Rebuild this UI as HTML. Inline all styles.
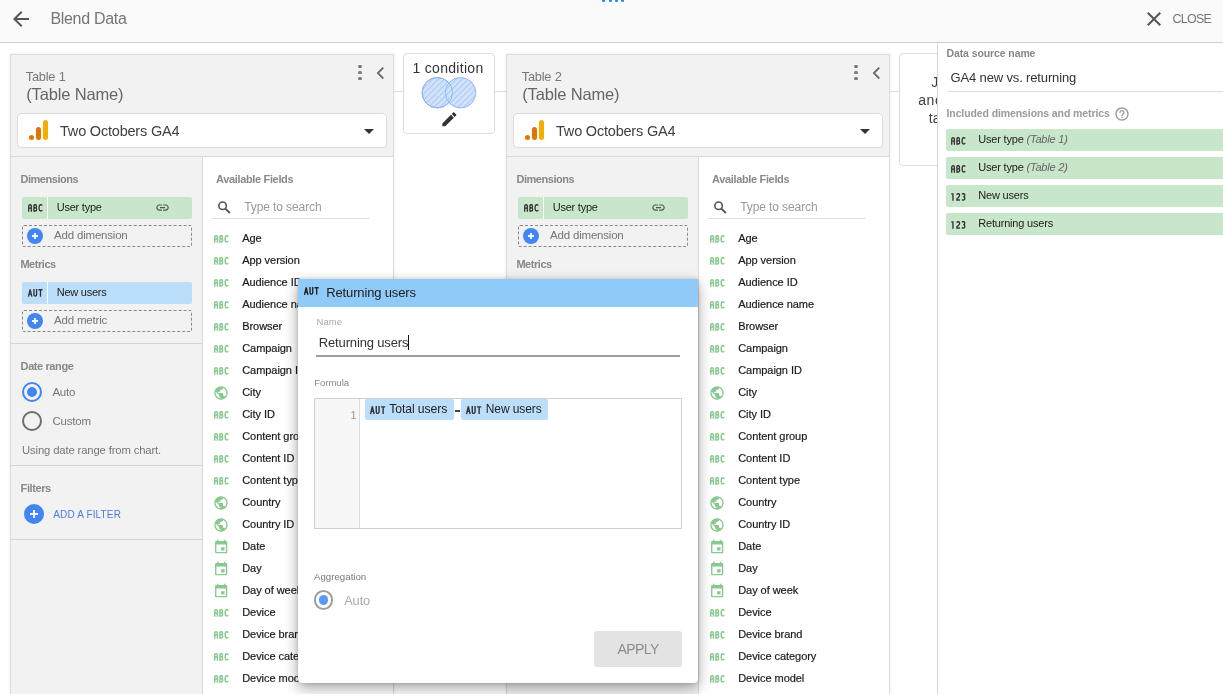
<!DOCTYPE html>
<html><head><meta charset="utf-8"><style>
*{box-sizing:border-box;margin:0;padding:0}
html,body{width:1223px;height:694px;overflow:hidden;background:#fff;font-family:"Liberation Sans",sans-serif;position:relative}
div,span,svg{position:absolute}
.t{white-space:nowrap}
.panel{top:54px;width:384px;height:700px;border:1px solid #dadada;background:#f2f2f2;box-shadow:0 0 3px rgba(0,0,0,.07)}
.plus{width:16px;height:16px;border-radius:50%;background:#4285f4}
.plus::before{content:"";position:absolute;left:5px;top:7.2px;width:6px;height:1.6px;background:#f4f8ff}
.plus::after{content:"";position:absolute;left:7.2px;top:5px;width:1.6px;height:6px;background:#f4f8ff}
.conn{height:1px;background:#dedede;top:91px}
</style></head><body><div id="root" style="left:0;top:0;width:1223px;height:694px;overflow:hidden;will-change:transform">
<div class="box" style="left:0;top:0;width:1223px;height:43px;background:#fafafa;border-bottom:1px solid #cfcfcf"></div>
<svg style="left:9px;top:7px" width="24" height="24" viewBox="0 0 24 24"><path fill="#555" d="M20 11H7.83l5.59-5.59L12 4l-8 8 8 8 1.41-1.41L7.83 13H20v-2z"/></svg>
<div class="t" style="left:50.40px;top:10.65px;font-size:16px;line-height:16px;color:#757575;letter-spacing:-0.3px">Blend Data</div>
<div class="box" style="left:602.3px;top:-1.2px;width:3px;height:3.4px;border-radius:50%;background:#1a8cf0"></div>
<div class="box" style="left:608.5px;top:-1.2px;width:3px;height:3.4px;border-radius:50%;background:#1a8cf0"></div>
<div class="box" style="left:614.8px;top:-1.2px;width:3px;height:3.4px;border-radius:50%;background:#1a8cf0"></div>
<div class="box" style="left:621px;top:-1.2px;width:3px;height:3.4px;border-radius:50%;background:#1a8cf0"></div>
<svg style="left:1142px;top:7px" width="24" height="24" viewBox="0 0 24 24"><path fill="#555" d="M19 6.41L17.59 5 12 10.59 6.41 5 5 6.41 10.59 12 5 17.59 6.41 19 12 13.41 17.59 19 19 17.59 13.41 12z"/></svg>
<div class="t" style="left:1172.60px;top:12.62px;font-size:12.5px;line-height:12.5px;color:#757575;letter-spacing:-0.8px">CLOSE</div>

<div class="conn" style="left:393px;width:10px"></div>
<div class="conn" style="left:495px;width:11px"></div>
<div class="conn" style="left:889px;width:11px"></div>

<div class="panel" style="left:10px"></div>
<div class="box" style="left:11px;top:55px;width:382px;height:101px;background:#f2f2f2"></div>
<div class="box" style="left:11px;top:156px;width:382px;height:1px;background:#d9d9d9"></div>
<div class="box" style="left:11px;top:157px;width:192px;height:540px;background:#f2f2f2;border-right:1px solid #dadada"></div>
<div class="box" style="left:203px;top:157px;width:190px;height:540px;background:#fff"></div>
<div class="t" style="left:25.70px;top:70.66px;font-size:12.8px;line-height:12.8px;color:#777;letter-spacing:-0.2px">Table 1</div>
<div class="t" style="left:26.20px;top:86.23px;font-size:16.5px;line-height:16.5px;color:#666;letter-spacing:-0.15px">(Table Name)</div>
<div class="box" style="left:358.35px;top:65px;width:3.3px;height:3.3px;border-radius:50%;background:#777"></div>
<div class="box" style="left:358.35px;top:71.1px;width:3.3px;height:3.3px;border-radius:50%;background:#777"></div>
<div class="box" style="left:358.35px;top:77.1px;width:3.3px;height:3.3px;border-radius:50%;background:#777"></div>
<svg style="left:372px;top:61px" width="24" height="24" viewBox="372 61 24 24"><path d="M383.3 67.7 L377.9 73.1 L383.3 78.5" stroke="#6a6a6a" stroke-width="1.9" fill="none"/></svg>
<div class="box" style="left:17px;top:113px;width:370px;height:35px;background:#fff;border:1px solid #dcdcdc;border-radius:4px"></div>
<div class="box" style="left:29px;top:135px;width:5px;height:5px;border-radius:50%;background:#e37400"></div>
<div class="box" style="left:36px;top:127px;width:5px;height:13px;border-radius:2.5px;background:#e37400"></div>
<div class="box" style="left:43px;top:120px;width:5px;height:20px;border-radius:2.5px;background:#f9ab00"></div>
<div class="t" style="left:60.00px;top:123.72px;font-size:14.5px;line-height:14.5px;color:#3c4043;letter-spacing:-0.2px">Two Octobers GA4</div>
<div class="box" style="left:363.5px;top:128.5px;width:0;height:0;border-left:5.5px solid transparent;border-right:5.5px solid transparent;border-top:5.6px solid #333"></div>
<div class="t" style="left:20.40px;top:173.99px;font-size:11px;line-height:11px;color:#888;font-weight:bold;letter-spacing:-0.45px">Dimensions</div>
<div class="box" style="left:22px;top:197px;width:170px;height:21.5px;background:#c8e6c9;border-radius:2px"></div>
<div class="box" style="left:47px;top:197px;width:1px;height:21.5px;background:#fff"></div>
<svg style="left:27px;top:203px" width="18.34" height="10.5" viewBox="-1 -1 17.96 10.28"><g fill="none" stroke="#333" stroke-width="1.3" stroke-linecap="butt"><path transform="translate(0.00,0)" d="M0.7 7.5 V2.3 Q0.7 0.7 2 0.7 Q3.3 0.7 3.3 2.3 V7.5 M0.7 4.0 H3.3"/><path transform="translate(5.10,0)" d="M0.7 0.7 V6.8 H2.2 Q3.4 6.8 3.4 5.2 Q3.4 3.7 2.2 3.7 H0.7 M0.7 0.7 H2.1 Q3.2 0.7 3.2 2.2 Q3.2 3.7 2.1 3.7"/><path transform="translate(10.20,0)" d="M3.6 1.6 Q3.3 0.7 2.2 0.7 Q0.7 0.7 0.7 3.75 Q0.7 6.8 2.2 6.8 Q3.3 6.8 3.6 5.9"/></g></svg>
<div class="t" style="left:56.80px;top:201.59px;font-size:11px;line-height:11px;color:#212121;letter-spacing:-0.25px">User type</div>
<svg style="left:154.5px;top:199.5px" width="15" height="15" viewBox="0 0 24 24"><path fill="#555" d="M3.9 12c0-1.71 1.39-3.1 3.1-3.1h4V7H7c-2.76 0-5 2.24-5 5s2.24 5 5 5h4v-1.9H7c-1.71 0-3.1-1.39-3.1-3.1zM8 13h8v-2H8v2zm9-6h-4v1.9h4c1.71 0 3.1 1.39 3.1 3.1s-1.39 3.1-3.1 3.1h-4V17h4c2.76 0 5-2.24 5-5s-2.24-5-5-5z"/></svg>
<div class="box" style="left:22px;top:225px;width:170px;height:22px;border:1px dashed #8a8a8a;border-radius:2px"></div>
<div class="box plus" style="left:27px;top:228px"></div>
<div class="t" style="left:54.10px;top:229.96px;font-size:11.5px;line-height:11.5px;color:#757575;letter-spacing:-0.2px">Add dimension</div>
<div class="t" style="left:20.40px;top:259.09px;font-size:11px;line-height:11px;color:#888;font-weight:bold;letter-spacing:-0.45px">Metrics</div>
<div class="box" style="left:22px;top:282px;width:170px;height:21.5px;background:#bbdefb;border-radius:2px"></div>
<div class="box" style="left:47px;top:282px;width:1px;height:21.5px;background:#fff"></div>
<svg style="left:27px;top:288px" width="18.34" height="10.5" viewBox="-1 -1 17.96 10.28"><g fill="none" stroke="#333" stroke-width="1.3" stroke-linecap="butt"><path transform="translate(0.00,0)" d="M0.4 7.5 L2.1 0.4 L3.7 7.5 M1.1 5 H3"/><path transform="translate(5.10,0)" d="M0.7 0 V5.3 Q0.7 6.8 2 6.8 Q3.3 6.8 3.3 5.3 V0"/><path transform="translate(10.20,0)" d="M0 0.7 H4 M2 0.7 V7.5"/></g></svg>
<div class="t" style="left:56.80px;top:286.59px;font-size:11px;line-height:11px;color:#212121;letter-spacing:-0.25px">New users</div>
<div class="box" style="left:22px;top:310px;width:170px;height:22px;border:1px dashed #8a8a8a;border-radius:2px"></div>
<div class="box plus" style="left:27px;top:313px"></div>
<div class="t" style="left:54.10px;top:314.96px;font-size:11.5px;line-height:11.5px;color:#757575;letter-spacing:-0.2px">Add metric</div>
<div class="box" style="left:11px;top:343px;width:191px;height:1px;background:#d4d4d4"></div>
<div class="t" style="left:20.60px;top:361.09px;font-size:11px;line-height:11px;color:#888;font-weight:bold;letter-spacing:-0.4px">Date range</div>
<div class="box" style="left:21.8px;top:381.9px;width:20px;height:20px;border:2px solid #4285f4;border-radius:50%"></div>
<div class="box" style="left:26.8px;top:386.9px;width:10px;height:10px;border-radius:50%;background:#4285f4"></div>
<div class="t" style="left:52.40px;top:386.66px;font-size:11.5px;line-height:11.5px;color:#777;letter-spacing:-0.2px">Auto</div>
<div class="box" style="left:21.8px;top:411.2px;width:20px;height:20px;border:2px solid #6e6e6e;border-radius:50%"></div>
<div class="t" style="left:52.40px;top:415.96px;font-size:11.5px;line-height:11.5px;color:#777;letter-spacing:-0.2px">Custom</div>
<div class="t" style="left:22.10px;top:445.03px;font-size:11.3px;line-height:11.3px;color:#777;letter-spacing:-0.15px">Using date range from chart.</div>
<div class="box" style="left:11px;top:465px;width:191px;height:1px;background:#d4d4d4"></div>
<div class="t" style="left:20.60px;top:482.99px;font-size:11px;line-height:11px;color:#888;font-weight:bold;letter-spacing:-0.4px">Filters</div>
<div class="box" style="left:23.6px;top:504.1px;width:20px;height:20px;border-radius:50%;background:#4285f4"></div>
<div class="box" style="left:29.6px;top:513.1px;width:8px;height:2px;background:#fff"></div>
<div class="box" style="left:32.6px;top:510.1px;width:2px;height:8px;background:#fff"></div>
<div class="t" style="left:53.30px;top:510.23px;font-size:10px;line-height:10px;color:#4a7be0;letter-spacing:0.15px">ADD A FILTER</div>
<div class="box" style="left:11px;top:539px;width:191px;height:1px;background:#d4d4d4"></div>
<div class="t" style="left:216.10px;top:173.69px;font-size:11px;line-height:11px;color:#888;font-weight:bold;letter-spacing:-0.35px">Available Fields</div>
<svg style="left:215px;top:196px" width="30" height="22" viewBox="215 196 30 22"><circle cx="222.6" cy="205.8" r="3.75" stroke="#555" stroke-width="1.6" fill="none"/><path d="M225.4 208.6 L229.8 213" stroke="#555" stroke-width="1.9"/></svg>
<div class="t" style="left:244.20px;top:201.04px;font-size:12px;line-height:12px;color:#9a9a9a;letter-spacing:-0.1px">Type to search</div>
<div class="box" style="left:212px;top:218px;width:157px;height:1px;background:#dcdcdc"></div>
<svg style="left:213px;top:234.2px" width="18.34" height="10.5" viewBox="-1 -1 17.96 10.28"><g fill="none" stroke="#88c990" stroke-width="1.45" stroke-linecap="butt"><path transform="translate(0.00,0)" d="M0.7 7.5 V2.3 Q0.7 0.7 2 0.7 Q3.3 0.7 3.3 2.3 V7.5 M0.7 4.0 H3.3"/><path transform="translate(5.10,0)" d="M0.7 0.7 V6.8 H2.2 Q3.4 6.8 3.4 5.2 Q3.4 3.7 2.2 3.7 H0.7 M0.7 0.7 H2.1 Q3.2 0.7 3.2 2.2 Q3.2 3.7 2.1 3.7"/><path transform="translate(10.20,0)" d="M3.6 1.6 Q3.3 0.7 2.2 0.7 Q0.7 0.7 0.7 3.75 Q0.7 6.8 2.2 6.8 Q3.3 6.8 3.6 5.9"/></g></svg>
<div class="t" style="left:242.20px;top:232.69px;font-size:11px;line-height:11px;color:#1a1a1a;letter-spacing:-0.05px;-webkit-text-stroke:0.2px #1a1a1a">Age</div>
<svg style="left:213px;top:256.2px" width="18.34" height="10.5" viewBox="-1 -1 17.96 10.28"><g fill="none" stroke="#88c990" stroke-width="1.45" stroke-linecap="butt"><path transform="translate(0.00,0)" d="M0.7 7.5 V2.3 Q0.7 0.7 2 0.7 Q3.3 0.7 3.3 2.3 V7.5 M0.7 4.0 H3.3"/><path transform="translate(5.10,0)" d="M0.7 0.7 V6.8 H2.2 Q3.4 6.8 3.4 5.2 Q3.4 3.7 2.2 3.7 H0.7 M0.7 0.7 H2.1 Q3.2 0.7 3.2 2.2 Q3.2 3.7 2.1 3.7"/><path transform="translate(10.20,0)" d="M3.6 1.6 Q3.3 0.7 2.2 0.7 Q0.7 0.7 0.7 3.75 Q0.7 6.8 2.2 6.8 Q3.3 6.8 3.6 5.9"/></g></svg>
<div class="t" style="left:242.20px;top:254.69px;font-size:11px;line-height:11px;color:#1a1a1a;letter-spacing:-0.05px;-webkit-text-stroke:0.2px #1a1a1a">App version</div>
<svg style="left:213px;top:278.2px" width="18.34" height="10.5" viewBox="-1 -1 17.96 10.28"><g fill="none" stroke="#88c990" stroke-width="1.45" stroke-linecap="butt"><path transform="translate(0.00,0)" d="M0.7 7.5 V2.3 Q0.7 0.7 2 0.7 Q3.3 0.7 3.3 2.3 V7.5 M0.7 4.0 H3.3"/><path transform="translate(5.10,0)" d="M0.7 0.7 V6.8 H2.2 Q3.4 6.8 3.4 5.2 Q3.4 3.7 2.2 3.7 H0.7 M0.7 0.7 H2.1 Q3.2 0.7 3.2 2.2 Q3.2 3.7 2.1 3.7"/><path transform="translate(10.20,0)" d="M3.6 1.6 Q3.3 0.7 2.2 0.7 Q0.7 0.7 0.7 3.75 Q0.7 6.8 2.2 6.8 Q3.3 6.8 3.6 5.9"/></g></svg>
<div class="t" style="left:242.20px;top:276.69px;font-size:11px;line-height:11px;color:#1a1a1a;letter-spacing:-0.05px;-webkit-text-stroke:0.2px #1a1a1a">Audience ID</div>
<svg style="left:213px;top:300.2px" width="18.34" height="10.5" viewBox="-1 -1 17.96 10.28"><g fill="none" stroke="#88c990" stroke-width="1.45" stroke-linecap="butt"><path transform="translate(0.00,0)" d="M0.7 7.5 V2.3 Q0.7 0.7 2 0.7 Q3.3 0.7 3.3 2.3 V7.5 M0.7 4.0 H3.3"/><path transform="translate(5.10,0)" d="M0.7 0.7 V6.8 H2.2 Q3.4 6.8 3.4 5.2 Q3.4 3.7 2.2 3.7 H0.7 M0.7 0.7 H2.1 Q3.2 0.7 3.2 2.2 Q3.2 3.7 2.1 3.7"/><path transform="translate(10.20,0)" d="M3.6 1.6 Q3.3 0.7 2.2 0.7 Q0.7 0.7 0.7 3.75 Q0.7 6.8 2.2 6.8 Q3.3 6.8 3.6 5.9"/></g></svg>
<div class="t" style="left:242.20px;top:298.69px;font-size:11px;line-height:11px;color:#1a1a1a;letter-spacing:-0.05px;-webkit-text-stroke:0.2px #1a1a1a">Audience name</div>
<svg style="left:213px;top:322.2px" width="18.34" height="10.5" viewBox="-1 -1 17.96 10.28"><g fill="none" stroke="#88c990" stroke-width="1.45" stroke-linecap="butt"><path transform="translate(0.00,0)" d="M0.7 7.5 V2.3 Q0.7 0.7 2 0.7 Q3.3 0.7 3.3 2.3 V7.5 M0.7 4.0 H3.3"/><path transform="translate(5.10,0)" d="M0.7 0.7 V6.8 H2.2 Q3.4 6.8 3.4 5.2 Q3.4 3.7 2.2 3.7 H0.7 M0.7 0.7 H2.1 Q3.2 0.7 3.2 2.2 Q3.2 3.7 2.1 3.7"/><path transform="translate(10.20,0)" d="M3.6 1.6 Q3.3 0.7 2.2 0.7 Q0.7 0.7 0.7 3.75 Q0.7 6.8 2.2 6.8 Q3.3 6.8 3.6 5.9"/></g></svg>
<div class="t" style="left:242.20px;top:320.69px;font-size:11px;line-height:11px;color:#1a1a1a;letter-spacing:-0.05px;-webkit-text-stroke:0.2px #1a1a1a">Browser</div>
<svg style="left:213px;top:344.2px" width="18.34" height="10.5" viewBox="-1 -1 17.96 10.28"><g fill="none" stroke="#88c990" stroke-width="1.45" stroke-linecap="butt"><path transform="translate(0.00,0)" d="M0.7 7.5 V2.3 Q0.7 0.7 2 0.7 Q3.3 0.7 3.3 2.3 V7.5 M0.7 4.0 H3.3"/><path transform="translate(5.10,0)" d="M0.7 0.7 V6.8 H2.2 Q3.4 6.8 3.4 5.2 Q3.4 3.7 2.2 3.7 H0.7 M0.7 0.7 H2.1 Q3.2 0.7 3.2 2.2 Q3.2 3.7 2.1 3.7"/><path transform="translate(10.20,0)" d="M3.6 1.6 Q3.3 0.7 2.2 0.7 Q0.7 0.7 0.7 3.75 Q0.7 6.8 2.2 6.8 Q3.3 6.8 3.6 5.9"/></g></svg>
<div class="t" style="left:242.20px;top:342.69px;font-size:11px;line-height:11px;color:#1a1a1a;letter-spacing:-0.05px;-webkit-text-stroke:0.2px #1a1a1a">Campaign</div>
<svg style="left:213px;top:366.2px" width="18.34" height="10.5" viewBox="-1 -1 17.96 10.28"><g fill="none" stroke="#88c990" stroke-width="1.45" stroke-linecap="butt"><path transform="translate(0.00,0)" d="M0.7 7.5 V2.3 Q0.7 0.7 2 0.7 Q3.3 0.7 3.3 2.3 V7.5 M0.7 4.0 H3.3"/><path transform="translate(5.10,0)" d="M0.7 0.7 V6.8 H2.2 Q3.4 6.8 3.4 5.2 Q3.4 3.7 2.2 3.7 H0.7 M0.7 0.7 H2.1 Q3.2 0.7 3.2 2.2 Q3.2 3.7 2.1 3.7"/><path transform="translate(10.20,0)" d="M3.6 1.6 Q3.3 0.7 2.2 0.7 Q0.7 0.7 0.7 3.75 Q0.7 6.8 2.2 6.8 Q3.3 6.8 3.6 5.9"/></g></svg>
<div class="t" style="left:242.20px;top:364.69px;font-size:11px;line-height:11px;color:#1a1a1a;letter-spacing:-0.05px;-webkit-text-stroke:0.2px #1a1a1a">Campaign ID</div>
<svg style="left:213px;top:385px" width="16" height="16" viewBox="0 0 24 24"><path fill="#88c990" d="M12 2C6.48 2 2 6.48 2 12s4.48 10 10 10 10-4.48 10-10S17.52 2 12 2zm-1 17.93c-3.95-.49-7-3.85-7-7.93 0-.62.08-1.21.21-1.79L9 15v1c0 1.1.9 2 2 2v1.93zm6.9-2.54c-.26-.81-1-1.39-1.9-1.39h-1v-3c0-.55-.45-1-1-1H8v-2h2c.55 0 1-.45 1-1V7h2c1.1 0 2-.9 2-2v-.41c2.93 1.19 5 4.06 5 7.41 0 2.08-.8 3.97-2.1 5.39z"/></svg>
<div class="t" style="left:242.20px;top:386.69px;font-size:11px;line-height:11px;color:#1a1a1a;letter-spacing:-0.05px;-webkit-text-stroke:0.2px #1a1a1a">City</div>
<svg style="left:213px;top:410.2px" width="18.34" height="10.5" viewBox="-1 -1 17.96 10.28"><g fill="none" stroke="#88c990" stroke-width="1.45" stroke-linecap="butt"><path transform="translate(0.00,0)" d="M0.7 7.5 V2.3 Q0.7 0.7 2 0.7 Q3.3 0.7 3.3 2.3 V7.5 M0.7 4.0 H3.3"/><path transform="translate(5.10,0)" d="M0.7 0.7 V6.8 H2.2 Q3.4 6.8 3.4 5.2 Q3.4 3.7 2.2 3.7 H0.7 M0.7 0.7 H2.1 Q3.2 0.7 3.2 2.2 Q3.2 3.7 2.1 3.7"/><path transform="translate(10.20,0)" d="M3.6 1.6 Q3.3 0.7 2.2 0.7 Q0.7 0.7 0.7 3.75 Q0.7 6.8 2.2 6.8 Q3.3 6.8 3.6 5.9"/></g></svg>
<div class="t" style="left:242.20px;top:408.69px;font-size:11px;line-height:11px;color:#1a1a1a;letter-spacing:-0.05px;-webkit-text-stroke:0.2px #1a1a1a">City ID</div>
<svg style="left:213px;top:432.2px" width="18.34" height="10.5" viewBox="-1 -1 17.96 10.28"><g fill="none" stroke="#88c990" stroke-width="1.45" stroke-linecap="butt"><path transform="translate(0.00,0)" d="M0.7 7.5 V2.3 Q0.7 0.7 2 0.7 Q3.3 0.7 3.3 2.3 V7.5 M0.7 4.0 H3.3"/><path transform="translate(5.10,0)" d="M0.7 0.7 V6.8 H2.2 Q3.4 6.8 3.4 5.2 Q3.4 3.7 2.2 3.7 H0.7 M0.7 0.7 H2.1 Q3.2 0.7 3.2 2.2 Q3.2 3.7 2.1 3.7"/><path transform="translate(10.20,0)" d="M3.6 1.6 Q3.3 0.7 2.2 0.7 Q0.7 0.7 0.7 3.75 Q0.7 6.8 2.2 6.8 Q3.3 6.8 3.6 5.9"/></g></svg>
<div class="t" style="left:242.20px;top:430.69px;font-size:11px;line-height:11px;color:#1a1a1a;letter-spacing:-0.05px;-webkit-text-stroke:0.2px #1a1a1a">Content group</div>
<svg style="left:213px;top:454.2px" width="18.34" height="10.5" viewBox="-1 -1 17.96 10.28"><g fill="none" stroke="#88c990" stroke-width="1.45" stroke-linecap="butt"><path transform="translate(0.00,0)" d="M0.7 7.5 V2.3 Q0.7 0.7 2 0.7 Q3.3 0.7 3.3 2.3 V7.5 M0.7 4.0 H3.3"/><path transform="translate(5.10,0)" d="M0.7 0.7 V6.8 H2.2 Q3.4 6.8 3.4 5.2 Q3.4 3.7 2.2 3.7 H0.7 M0.7 0.7 H2.1 Q3.2 0.7 3.2 2.2 Q3.2 3.7 2.1 3.7"/><path transform="translate(10.20,0)" d="M3.6 1.6 Q3.3 0.7 2.2 0.7 Q0.7 0.7 0.7 3.75 Q0.7 6.8 2.2 6.8 Q3.3 6.8 3.6 5.9"/></g></svg>
<div class="t" style="left:242.20px;top:452.69px;font-size:11px;line-height:11px;color:#1a1a1a;letter-spacing:-0.05px;-webkit-text-stroke:0.2px #1a1a1a">Content ID</div>
<svg style="left:213px;top:476.2px" width="18.34" height="10.5" viewBox="-1 -1 17.96 10.28"><g fill="none" stroke="#88c990" stroke-width="1.45" stroke-linecap="butt"><path transform="translate(0.00,0)" d="M0.7 7.5 V2.3 Q0.7 0.7 2 0.7 Q3.3 0.7 3.3 2.3 V7.5 M0.7 4.0 H3.3"/><path transform="translate(5.10,0)" d="M0.7 0.7 V6.8 H2.2 Q3.4 6.8 3.4 5.2 Q3.4 3.7 2.2 3.7 H0.7 M0.7 0.7 H2.1 Q3.2 0.7 3.2 2.2 Q3.2 3.7 2.1 3.7"/><path transform="translate(10.20,0)" d="M3.6 1.6 Q3.3 0.7 2.2 0.7 Q0.7 0.7 0.7 3.75 Q0.7 6.8 2.2 6.8 Q3.3 6.8 3.6 5.9"/></g></svg>
<div class="t" style="left:242.20px;top:474.69px;font-size:11px;line-height:11px;color:#1a1a1a;letter-spacing:-0.05px;-webkit-text-stroke:0.2px #1a1a1a">Content type</div>
<svg style="left:213px;top:495px" width="16" height="16" viewBox="0 0 24 24"><path fill="#88c990" d="M12 2C6.48 2 2 6.48 2 12s4.48 10 10 10 10-4.48 10-10S17.52 2 12 2zm-1 17.93c-3.95-.49-7-3.85-7-7.93 0-.62.08-1.21.21-1.79L9 15v1c0 1.1.9 2 2 2v1.93zm6.9-2.54c-.26-.81-1-1.39-1.9-1.39h-1v-3c0-.55-.45-1-1-1H8v-2h2c.55 0 1-.45 1-1V7h2c1.1 0 2-.9 2-2v-.41c2.93 1.19 5 4.06 5 7.41 0 2.08-.8 3.97-2.1 5.39z"/></svg>
<div class="t" style="left:242.20px;top:496.69px;font-size:11px;line-height:11px;color:#1a1a1a;letter-spacing:-0.05px;-webkit-text-stroke:0.2px #1a1a1a">Country</div>
<svg style="left:213px;top:517px" width="16" height="16" viewBox="0 0 24 24"><path fill="#88c990" d="M12 2C6.48 2 2 6.48 2 12s4.48 10 10 10 10-4.48 10-10S17.52 2 12 2zm-1 17.93c-3.95-.49-7-3.85-7-7.93 0-.62.08-1.21.21-1.79L9 15v1c0 1.1.9 2 2 2v1.93zm6.9-2.54c-.26-.81-1-1.39-1.9-1.39h-1v-3c0-.55-.45-1-1-1H8v-2h2c.55 0 1-.45 1-1V7h2c1.1 0 2-.9 2-2v-.41c2.93 1.19 5 4.06 5 7.41 0 2.08-.8 3.97-2.1 5.39z"/></svg>
<div class="t" style="left:242.20px;top:518.69px;font-size:11px;line-height:11px;color:#1a1a1a;letter-spacing:-0.05px;-webkit-text-stroke:0.2px #1a1a1a">Country ID</div>
<svg style="left:212.8px;top:538.8px" width="16.3" height="16.3" viewBox="0 0 24 24"><path fill="#88c990" d="M17 12h-5v5h5v-5zM16 1v2H8V1H6v2H5c-1.11 0-1.99.9-1.99 2L3 19c0 1.1.89 2 2 2h14c1.1 0 2-.9 2-2V5c0-1.1-.9-2-2-2h-1V1h-2zm3 18H5V8h14v11z"/></svg>
<div class="t" style="left:242.20px;top:540.69px;font-size:11px;line-height:11px;color:#1a1a1a;letter-spacing:-0.05px;-webkit-text-stroke:0.2px #1a1a1a">Date</div>
<svg style="left:212.8px;top:560.8px" width="16.3" height="16.3" viewBox="0 0 24 24"><path fill="#88c990" d="M17 12h-5v5h5v-5zM16 1v2H8V1H6v2H5c-1.11 0-1.99.9-1.99 2L3 19c0 1.1.89 2 2 2h14c1.1 0 2-.9 2-2V5c0-1.1-.9-2-2-2h-1V1h-2zm3 18H5V8h14v11z"/></svg>
<div class="t" style="left:242.20px;top:562.69px;font-size:11px;line-height:11px;color:#1a1a1a;letter-spacing:-0.05px;-webkit-text-stroke:0.2px #1a1a1a">Day</div>
<svg style="left:212.8px;top:582.8px" width="16.3" height="16.3" viewBox="0 0 24 24"><path fill="#88c990" d="M17 12h-5v5h5v-5zM16 1v2H8V1H6v2H5c-1.11 0-1.99.9-1.99 2L3 19c0 1.1.89 2 2 2h14c1.1 0 2-.9 2-2V5c0-1.1-.9-2-2-2h-1V1h-2zm3 18H5V8h14v11z"/></svg>
<div class="t" style="left:242.20px;top:584.69px;font-size:11px;line-height:11px;color:#1a1a1a;letter-spacing:-0.05px;-webkit-text-stroke:0.2px #1a1a1a">Day of week</div>
<svg style="left:213px;top:608.2px" width="18.34" height="10.5" viewBox="-1 -1 17.96 10.28"><g fill="none" stroke="#88c990" stroke-width="1.45" stroke-linecap="butt"><path transform="translate(0.00,0)" d="M0.7 7.5 V2.3 Q0.7 0.7 2 0.7 Q3.3 0.7 3.3 2.3 V7.5 M0.7 4.0 H3.3"/><path transform="translate(5.10,0)" d="M0.7 0.7 V6.8 H2.2 Q3.4 6.8 3.4 5.2 Q3.4 3.7 2.2 3.7 H0.7 M0.7 0.7 H2.1 Q3.2 0.7 3.2 2.2 Q3.2 3.7 2.1 3.7"/><path transform="translate(10.20,0)" d="M3.6 1.6 Q3.3 0.7 2.2 0.7 Q0.7 0.7 0.7 3.75 Q0.7 6.8 2.2 6.8 Q3.3 6.8 3.6 5.9"/></g></svg>
<div class="t" style="left:242.20px;top:606.69px;font-size:11px;line-height:11px;color:#1a1a1a;letter-spacing:-0.05px;-webkit-text-stroke:0.2px #1a1a1a">Device</div>
<svg style="left:213px;top:630.2px" width="18.34" height="10.5" viewBox="-1 -1 17.96 10.28"><g fill="none" stroke="#88c990" stroke-width="1.45" stroke-linecap="butt"><path transform="translate(0.00,0)" d="M0.7 7.5 V2.3 Q0.7 0.7 2 0.7 Q3.3 0.7 3.3 2.3 V7.5 M0.7 4.0 H3.3"/><path transform="translate(5.10,0)" d="M0.7 0.7 V6.8 H2.2 Q3.4 6.8 3.4 5.2 Q3.4 3.7 2.2 3.7 H0.7 M0.7 0.7 H2.1 Q3.2 0.7 3.2 2.2 Q3.2 3.7 2.1 3.7"/><path transform="translate(10.20,0)" d="M3.6 1.6 Q3.3 0.7 2.2 0.7 Q0.7 0.7 0.7 3.75 Q0.7 6.8 2.2 6.8 Q3.3 6.8 3.6 5.9"/></g></svg>
<div class="t" style="left:242.20px;top:628.69px;font-size:11px;line-height:11px;color:#1a1a1a;letter-spacing:-0.05px;-webkit-text-stroke:0.2px #1a1a1a">Device brand</div>
<svg style="left:213px;top:652.2px" width="18.34" height="10.5" viewBox="-1 -1 17.96 10.28"><g fill="none" stroke="#88c990" stroke-width="1.45" stroke-linecap="butt"><path transform="translate(0.00,0)" d="M0.7 7.5 V2.3 Q0.7 0.7 2 0.7 Q3.3 0.7 3.3 2.3 V7.5 M0.7 4.0 H3.3"/><path transform="translate(5.10,0)" d="M0.7 0.7 V6.8 H2.2 Q3.4 6.8 3.4 5.2 Q3.4 3.7 2.2 3.7 H0.7 M0.7 0.7 H2.1 Q3.2 0.7 3.2 2.2 Q3.2 3.7 2.1 3.7"/><path transform="translate(10.20,0)" d="M3.6 1.6 Q3.3 0.7 2.2 0.7 Q0.7 0.7 0.7 3.75 Q0.7 6.8 2.2 6.8 Q3.3 6.8 3.6 5.9"/></g></svg>
<div class="t" style="left:242.20px;top:650.69px;font-size:11px;line-height:11px;color:#1a1a1a;letter-spacing:-0.05px;-webkit-text-stroke:0.2px #1a1a1a">Device category</div>
<svg style="left:213px;top:674.2px" width="18.34" height="10.5" viewBox="-1 -1 17.96 10.28"><g fill="none" stroke="#88c990" stroke-width="1.45" stroke-linecap="butt"><path transform="translate(0.00,0)" d="M0.7 7.5 V2.3 Q0.7 0.7 2 0.7 Q3.3 0.7 3.3 2.3 V7.5 M0.7 4.0 H3.3"/><path transform="translate(5.10,0)" d="M0.7 0.7 V6.8 H2.2 Q3.4 6.8 3.4 5.2 Q3.4 3.7 2.2 3.7 H0.7 M0.7 0.7 H2.1 Q3.2 0.7 3.2 2.2 Q3.2 3.7 2.1 3.7"/><path transform="translate(10.20,0)" d="M3.6 1.6 Q3.3 0.7 2.2 0.7 Q0.7 0.7 0.7 3.75 Q0.7 6.8 2.2 6.8 Q3.3 6.8 3.6 5.9"/></g></svg>
<div class="t" style="left:242.20px;top:672.69px;font-size:11px;line-height:11px;color:#1a1a1a;letter-spacing:-0.05px;-webkit-text-stroke:0.2px #1a1a1a">Device model</div>
<svg style="left:213px;top:696.2px" width="18.34" height="10.5" viewBox="-1 -1 17.96 10.28"><g fill="none" stroke="#88c990" stroke-width="1.45" stroke-linecap="butt"><path transform="translate(0.00,0)" d="M0.7 7.5 V2.3 Q0.7 0.7 2 0.7 Q3.3 0.7 3.3 2.3 V7.5 M0.7 4.0 H3.3"/><path transform="translate(5.10,0)" d="M0.7 0.7 V6.8 H2.2 Q3.4 6.8 3.4 5.2 Q3.4 3.7 2.2 3.7 H0.7 M0.7 0.7 H2.1 Q3.2 0.7 3.2 2.2 Q3.2 3.7 2.1 3.7"/><path transform="translate(10.20,0)" d="M3.6 1.6 Q3.3 0.7 2.2 0.7 Q0.7 0.7 0.7 3.75 Q0.7 6.8 2.2 6.8 Q3.3 6.8 3.6 5.9"/></g></svg>
<div class="t" style="left:242.20px;top:694.69px;font-size:11px;line-height:11px;color:#1a1a1a;letter-spacing:-0.05px;-webkit-text-stroke:0.2px #1a1a1a">Device OS</div>


<div class="panel" style="left:506px"></div>
<div class="box" style="left:507px;top:55px;width:382px;height:101px;background:#f2f2f2"></div>
<div class="box" style="left:507px;top:156px;width:382px;height:1px;background:#d9d9d9"></div>
<div class="box" style="left:507px;top:157px;width:192px;height:540px;background:#f2f2f2;border-right:1px solid #dadada"></div>
<div class="box" style="left:699px;top:157px;width:190px;height:540px;background:#fff"></div>
<div class="t" style="left:521.70px;top:70.66px;font-size:12.8px;line-height:12.8px;color:#777;letter-spacing:-0.2px">Table 2</div>
<div class="t" style="left:522.20px;top:86.23px;font-size:16.5px;line-height:16.5px;color:#666;letter-spacing:-0.15px">(Table Name)</div>
<div class="box" style="left:854.35px;top:65px;width:3.3px;height:3.3px;border-radius:50%;background:#777"></div>
<div class="box" style="left:854.35px;top:71.1px;width:3.3px;height:3.3px;border-radius:50%;background:#777"></div>
<div class="box" style="left:854.35px;top:77.1px;width:3.3px;height:3.3px;border-radius:50%;background:#777"></div>
<svg style="left:868px;top:61px" width="24" height="24" viewBox="868 61 24 24"><path d="M879.3 67.7 L873.9 73.1 L879.3 78.5" stroke="#6a6a6a" stroke-width="1.9" fill="none"/></svg>
<div class="box" style="left:513px;top:113px;width:370px;height:35px;background:#fff;border:1px solid #dcdcdc;border-radius:4px"></div>
<div class="box" style="left:525px;top:135px;width:5px;height:5px;border-radius:50%;background:#e37400"></div>
<div class="box" style="left:532px;top:127px;width:5px;height:13px;border-radius:2.5px;background:#e37400"></div>
<div class="box" style="left:539px;top:120px;width:5px;height:20px;border-radius:2.5px;background:#f9ab00"></div>
<div class="t" style="left:556.00px;top:123.72px;font-size:14.5px;line-height:14.5px;color:#3c4043;letter-spacing:-0.2px">Two Octobers GA4</div>
<div class="box" style="left:859.5px;top:128.5px;width:0;height:0;border-left:5.5px solid transparent;border-right:5.5px solid transparent;border-top:5.6px solid #333"></div>
<div class="t" style="left:516.40px;top:173.99px;font-size:11px;line-height:11px;color:#888;font-weight:bold;letter-spacing:-0.45px">Dimensions</div>
<div class="box" style="left:518px;top:197px;width:170px;height:21.5px;background:#c8e6c9;border-radius:2px"></div>
<div class="box" style="left:543px;top:197px;width:1px;height:21.5px;background:#fff"></div>
<svg style="left:523px;top:203px" width="18.34" height="10.5" viewBox="-1 -1 17.96 10.28"><g fill="none" stroke="#333" stroke-width="1.3" stroke-linecap="butt"><path transform="translate(0.00,0)" d="M0.7 7.5 V2.3 Q0.7 0.7 2 0.7 Q3.3 0.7 3.3 2.3 V7.5 M0.7 4.0 H3.3"/><path transform="translate(5.10,0)" d="M0.7 0.7 V6.8 H2.2 Q3.4 6.8 3.4 5.2 Q3.4 3.7 2.2 3.7 H0.7 M0.7 0.7 H2.1 Q3.2 0.7 3.2 2.2 Q3.2 3.7 2.1 3.7"/><path transform="translate(10.20,0)" d="M3.6 1.6 Q3.3 0.7 2.2 0.7 Q0.7 0.7 0.7 3.75 Q0.7 6.8 2.2 6.8 Q3.3 6.8 3.6 5.9"/></g></svg>
<div class="t" style="left:552.80px;top:201.59px;font-size:11px;line-height:11px;color:#212121;letter-spacing:-0.25px">User type</div>
<svg style="left:650.5px;top:199.5px" width="15" height="15" viewBox="0 0 24 24"><path fill="#555" d="M3.9 12c0-1.71 1.39-3.1 3.1-3.1h4V7H7c-2.76 0-5 2.24-5 5s2.24 5 5 5h4v-1.9H7c-1.71 0-3.1-1.39-3.1-3.1zM8 13h8v-2H8v2zm9-6h-4v1.9h4c1.71 0 3.1 1.39 3.1 3.1s-1.39 3.1-3.1 3.1h-4V17h4c2.76 0 5-2.24 5-5s-2.24-5-5-5z"/></svg>
<div class="box" style="left:518px;top:225px;width:170px;height:22px;border:1px dashed #8a8a8a;border-radius:2px"></div>
<div class="box plus" style="left:523px;top:228px"></div>
<div class="t" style="left:550.10px;top:229.96px;font-size:11.5px;line-height:11.5px;color:#757575;letter-spacing:-0.2px">Add dimension</div>
<div class="t" style="left:516.40px;top:259.09px;font-size:11px;line-height:11px;color:#888;font-weight:bold;letter-spacing:-0.45px">Metrics</div>
<div class="box" style="left:518px;top:282px;width:170px;height:21.5px;background:#bbdefb;border-radius:2px"></div>
<div class="box" style="left:543px;top:282px;width:1px;height:21.5px;background:#fff"></div>
<svg style="left:523px;top:288px" width="18.34" height="10.5" viewBox="-1 -1 17.96 10.28"><g fill="none" stroke="#333" stroke-width="1.3" stroke-linecap="butt"><path transform="translate(0.00,0)" d="M0.4 7.5 L2.1 0.4 L3.7 7.5 M1.1 5 H3"/><path transform="translate(5.10,0)" d="M0.7 0 V5.3 Q0.7 6.8 2 6.8 Q3.3 6.8 3.3 5.3 V0"/><path transform="translate(10.20,0)" d="M0 0.7 H4 M2 0.7 V7.5"/></g></svg>
<div class="t" style="left:552.80px;top:286.59px;font-size:11px;line-height:11px;color:#212121;letter-spacing:-0.25px">New users</div>
<div class="box" style="left:518px;top:310px;width:170px;height:22px;border:1px dashed #8a8a8a;border-radius:2px"></div>
<div class="box plus" style="left:523px;top:313px"></div>
<div class="t" style="left:550.10px;top:314.96px;font-size:11.5px;line-height:11.5px;color:#757575;letter-spacing:-0.2px">Add metric</div>
<div class="box" style="left:507px;top:343px;width:191px;height:1px;background:#d4d4d4"></div>
<div class="t" style="left:516.60px;top:361.09px;font-size:11px;line-height:11px;color:#888;font-weight:bold;letter-spacing:-0.4px">Date range</div>
<div class="box" style="left:517.8px;top:381.9px;width:20px;height:20px;border:2px solid #4285f4;border-radius:50%"></div>
<div class="box" style="left:522.8px;top:386.9px;width:10px;height:10px;border-radius:50%;background:#4285f4"></div>
<div class="t" style="left:548.40px;top:386.66px;font-size:11.5px;line-height:11.5px;color:#777;letter-spacing:-0.2px">Auto</div>
<div class="box" style="left:517.8px;top:411.2px;width:20px;height:20px;border:2px solid #6e6e6e;border-radius:50%"></div>
<div class="t" style="left:548.40px;top:415.96px;font-size:11.5px;line-height:11.5px;color:#777;letter-spacing:-0.2px">Custom</div>
<div class="t" style="left:518.10px;top:445.03px;font-size:11.3px;line-height:11.3px;color:#777;letter-spacing:-0.15px">Using date range from chart.</div>
<div class="box" style="left:507px;top:465px;width:191px;height:1px;background:#d4d4d4"></div>
<div class="t" style="left:516.60px;top:482.99px;font-size:11px;line-height:11px;color:#888;font-weight:bold;letter-spacing:-0.4px">Filters</div>
<div class="box" style="left:519.6px;top:504.1px;width:20px;height:20px;border-radius:50%;background:#4285f4"></div>
<div class="box" style="left:525.6px;top:513.1px;width:8px;height:2px;background:#fff"></div>
<div class="box" style="left:528.6px;top:510.1px;width:2px;height:8px;background:#fff"></div>
<div class="t" style="left:549.30px;top:510.23px;font-size:10px;line-height:10px;color:#4a7be0;letter-spacing:0.15px">ADD A FILTER</div>
<div class="box" style="left:507px;top:539px;width:191px;height:1px;background:#d4d4d4"></div>
<div class="t" style="left:712.10px;top:173.69px;font-size:11px;line-height:11px;color:#888;font-weight:bold;letter-spacing:-0.35px">Available Fields</div>
<svg style="left:711px;top:196px" width="30" height="22" viewBox="711 196 30 22"><circle cx="718.6" cy="205.8" r="3.75" stroke="#555" stroke-width="1.6" fill="none"/><path d="M721.4 208.6 L725.8 213" stroke="#555" stroke-width="1.9"/></svg>
<div class="t" style="left:740.20px;top:201.04px;font-size:12px;line-height:12px;color:#9a9a9a;letter-spacing:-0.1px">Type to search</div>
<div class="box" style="left:708px;top:218px;width:157px;height:1px;background:#dcdcdc"></div>
<svg style="left:709px;top:234.2px" width="18.34" height="10.5" viewBox="-1 -1 17.96 10.28"><g fill="none" stroke="#88c990" stroke-width="1.45" stroke-linecap="butt"><path transform="translate(0.00,0)" d="M0.7 7.5 V2.3 Q0.7 0.7 2 0.7 Q3.3 0.7 3.3 2.3 V7.5 M0.7 4.0 H3.3"/><path transform="translate(5.10,0)" d="M0.7 0.7 V6.8 H2.2 Q3.4 6.8 3.4 5.2 Q3.4 3.7 2.2 3.7 H0.7 M0.7 0.7 H2.1 Q3.2 0.7 3.2 2.2 Q3.2 3.7 2.1 3.7"/><path transform="translate(10.20,0)" d="M3.6 1.6 Q3.3 0.7 2.2 0.7 Q0.7 0.7 0.7 3.75 Q0.7 6.8 2.2 6.8 Q3.3 6.8 3.6 5.9"/></g></svg>
<div class="t" style="left:738.20px;top:232.69px;font-size:11px;line-height:11px;color:#1a1a1a;letter-spacing:-0.05px;-webkit-text-stroke:0.2px #1a1a1a">Age</div>
<svg style="left:709px;top:256.2px" width="18.34" height="10.5" viewBox="-1 -1 17.96 10.28"><g fill="none" stroke="#88c990" stroke-width="1.45" stroke-linecap="butt"><path transform="translate(0.00,0)" d="M0.7 7.5 V2.3 Q0.7 0.7 2 0.7 Q3.3 0.7 3.3 2.3 V7.5 M0.7 4.0 H3.3"/><path transform="translate(5.10,0)" d="M0.7 0.7 V6.8 H2.2 Q3.4 6.8 3.4 5.2 Q3.4 3.7 2.2 3.7 H0.7 M0.7 0.7 H2.1 Q3.2 0.7 3.2 2.2 Q3.2 3.7 2.1 3.7"/><path transform="translate(10.20,0)" d="M3.6 1.6 Q3.3 0.7 2.2 0.7 Q0.7 0.7 0.7 3.75 Q0.7 6.8 2.2 6.8 Q3.3 6.8 3.6 5.9"/></g></svg>
<div class="t" style="left:738.20px;top:254.69px;font-size:11px;line-height:11px;color:#1a1a1a;letter-spacing:-0.05px;-webkit-text-stroke:0.2px #1a1a1a">App version</div>
<svg style="left:709px;top:278.2px" width="18.34" height="10.5" viewBox="-1 -1 17.96 10.28"><g fill="none" stroke="#88c990" stroke-width="1.45" stroke-linecap="butt"><path transform="translate(0.00,0)" d="M0.7 7.5 V2.3 Q0.7 0.7 2 0.7 Q3.3 0.7 3.3 2.3 V7.5 M0.7 4.0 H3.3"/><path transform="translate(5.10,0)" d="M0.7 0.7 V6.8 H2.2 Q3.4 6.8 3.4 5.2 Q3.4 3.7 2.2 3.7 H0.7 M0.7 0.7 H2.1 Q3.2 0.7 3.2 2.2 Q3.2 3.7 2.1 3.7"/><path transform="translate(10.20,0)" d="M3.6 1.6 Q3.3 0.7 2.2 0.7 Q0.7 0.7 0.7 3.75 Q0.7 6.8 2.2 6.8 Q3.3 6.8 3.6 5.9"/></g></svg>
<div class="t" style="left:738.20px;top:276.69px;font-size:11px;line-height:11px;color:#1a1a1a;letter-spacing:-0.05px;-webkit-text-stroke:0.2px #1a1a1a">Audience ID</div>
<svg style="left:709px;top:300.2px" width="18.34" height="10.5" viewBox="-1 -1 17.96 10.28"><g fill="none" stroke="#88c990" stroke-width="1.45" stroke-linecap="butt"><path transform="translate(0.00,0)" d="M0.7 7.5 V2.3 Q0.7 0.7 2 0.7 Q3.3 0.7 3.3 2.3 V7.5 M0.7 4.0 H3.3"/><path transform="translate(5.10,0)" d="M0.7 0.7 V6.8 H2.2 Q3.4 6.8 3.4 5.2 Q3.4 3.7 2.2 3.7 H0.7 M0.7 0.7 H2.1 Q3.2 0.7 3.2 2.2 Q3.2 3.7 2.1 3.7"/><path transform="translate(10.20,0)" d="M3.6 1.6 Q3.3 0.7 2.2 0.7 Q0.7 0.7 0.7 3.75 Q0.7 6.8 2.2 6.8 Q3.3 6.8 3.6 5.9"/></g></svg>
<div class="t" style="left:738.20px;top:298.69px;font-size:11px;line-height:11px;color:#1a1a1a;letter-spacing:-0.05px;-webkit-text-stroke:0.2px #1a1a1a">Audience name</div>
<svg style="left:709px;top:322.2px" width="18.34" height="10.5" viewBox="-1 -1 17.96 10.28"><g fill="none" stroke="#88c990" stroke-width="1.45" stroke-linecap="butt"><path transform="translate(0.00,0)" d="M0.7 7.5 V2.3 Q0.7 0.7 2 0.7 Q3.3 0.7 3.3 2.3 V7.5 M0.7 4.0 H3.3"/><path transform="translate(5.10,0)" d="M0.7 0.7 V6.8 H2.2 Q3.4 6.8 3.4 5.2 Q3.4 3.7 2.2 3.7 H0.7 M0.7 0.7 H2.1 Q3.2 0.7 3.2 2.2 Q3.2 3.7 2.1 3.7"/><path transform="translate(10.20,0)" d="M3.6 1.6 Q3.3 0.7 2.2 0.7 Q0.7 0.7 0.7 3.75 Q0.7 6.8 2.2 6.8 Q3.3 6.8 3.6 5.9"/></g></svg>
<div class="t" style="left:738.20px;top:320.69px;font-size:11px;line-height:11px;color:#1a1a1a;letter-spacing:-0.05px;-webkit-text-stroke:0.2px #1a1a1a">Browser</div>
<svg style="left:709px;top:344.2px" width="18.34" height="10.5" viewBox="-1 -1 17.96 10.28"><g fill="none" stroke="#88c990" stroke-width="1.45" stroke-linecap="butt"><path transform="translate(0.00,0)" d="M0.7 7.5 V2.3 Q0.7 0.7 2 0.7 Q3.3 0.7 3.3 2.3 V7.5 M0.7 4.0 H3.3"/><path transform="translate(5.10,0)" d="M0.7 0.7 V6.8 H2.2 Q3.4 6.8 3.4 5.2 Q3.4 3.7 2.2 3.7 H0.7 M0.7 0.7 H2.1 Q3.2 0.7 3.2 2.2 Q3.2 3.7 2.1 3.7"/><path transform="translate(10.20,0)" d="M3.6 1.6 Q3.3 0.7 2.2 0.7 Q0.7 0.7 0.7 3.75 Q0.7 6.8 2.2 6.8 Q3.3 6.8 3.6 5.9"/></g></svg>
<div class="t" style="left:738.20px;top:342.69px;font-size:11px;line-height:11px;color:#1a1a1a;letter-spacing:-0.05px;-webkit-text-stroke:0.2px #1a1a1a">Campaign</div>
<svg style="left:709px;top:366.2px" width="18.34" height="10.5" viewBox="-1 -1 17.96 10.28"><g fill="none" stroke="#88c990" stroke-width="1.45" stroke-linecap="butt"><path transform="translate(0.00,0)" d="M0.7 7.5 V2.3 Q0.7 0.7 2 0.7 Q3.3 0.7 3.3 2.3 V7.5 M0.7 4.0 H3.3"/><path transform="translate(5.10,0)" d="M0.7 0.7 V6.8 H2.2 Q3.4 6.8 3.4 5.2 Q3.4 3.7 2.2 3.7 H0.7 M0.7 0.7 H2.1 Q3.2 0.7 3.2 2.2 Q3.2 3.7 2.1 3.7"/><path transform="translate(10.20,0)" d="M3.6 1.6 Q3.3 0.7 2.2 0.7 Q0.7 0.7 0.7 3.75 Q0.7 6.8 2.2 6.8 Q3.3 6.8 3.6 5.9"/></g></svg>
<div class="t" style="left:738.20px;top:364.69px;font-size:11px;line-height:11px;color:#1a1a1a;letter-spacing:-0.05px;-webkit-text-stroke:0.2px #1a1a1a">Campaign ID</div>
<svg style="left:709px;top:385px" width="16" height="16" viewBox="0 0 24 24"><path fill="#88c990" d="M12 2C6.48 2 2 6.48 2 12s4.48 10 10 10 10-4.48 10-10S17.52 2 12 2zm-1 17.93c-3.95-.49-7-3.85-7-7.93 0-.62.08-1.21.21-1.79L9 15v1c0 1.1.9 2 2 2v1.93zm6.9-2.54c-.26-.81-1-1.39-1.9-1.39h-1v-3c0-.55-.45-1-1-1H8v-2h2c.55 0 1-.45 1-1V7h2c1.1 0 2-.9 2-2v-.41c2.93 1.19 5 4.06 5 7.41 0 2.08-.8 3.97-2.1 5.39z"/></svg>
<div class="t" style="left:738.20px;top:386.69px;font-size:11px;line-height:11px;color:#1a1a1a;letter-spacing:-0.05px;-webkit-text-stroke:0.2px #1a1a1a">City</div>
<svg style="left:709px;top:410.2px" width="18.34" height="10.5" viewBox="-1 -1 17.96 10.28"><g fill="none" stroke="#88c990" stroke-width="1.45" stroke-linecap="butt"><path transform="translate(0.00,0)" d="M0.7 7.5 V2.3 Q0.7 0.7 2 0.7 Q3.3 0.7 3.3 2.3 V7.5 M0.7 4.0 H3.3"/><path transform="translate(5.10,0)" d="M0.7 0.7 V6.8 H2.2 Q3.4 6.8 3.4 5.2 Q3.4 3.7 2.2 3.7 H0.7 M0.7 0.7 H2.1 Q3.2 0.7 3.2 2.2 Q3.2 3.7 2.1 3.7"/><path transform="translate(10.20,0)" d="M3.6 1.6 Q3.3 0.7 2.2 0.7 Q0.7 0.7 0.7 3.75 Q0.7 6.8 2.2 6.8 Q3.3 6.8 3.6 5.9"/></g></svg>
<div class="t" style="left:738.20px;top:408.69px;font-size:11px;line-height:11px;color:#1a1a1a;letter-spacing:-0.05px;-webkit-text-stroke:0.2px #1a1a1a">City ID</div>
<svg style="left:709px;top:432.2px" width="18.34" height="10.5" viewBox="-1 -1 17.96 10.28"><g fill="none" stroke="#88c990" stroke-width="1.45" stroke-linecap="butt"><path transform="translate(0.00,0)" d="M0.7 7.5 V2.3 Q0.7 0.7 2 0.7 Q3.3 0.7 3.3 2.3 V7.5 M0.7 4.0 H3.3"/><path transform="translate(5.10,0)" d="M0.7 0.7 V6.8 H2.2 Q3.4 6.8 3.4 5.2 Q3.4 3.7 2.2 3.7 H0.7 M0.7 0.7 H2.1 Q3.2 0.7 3.2 2.2 Q3.2 3.7 2.1 3.7"/><path transform="translate(10.20,0)" d="M3.6 1.6 Q3.3 0.7 2.2 0.7 Q0.7 0.7 0.7 3.75 Q0.7 6.8 2.2 6.8 Q3.3 6.8 3.6 5.9"/></g></svg>
<div class="t" style="left:738.20px;top:430.69px;font-size:11px;line-height:11px;color:#1a1a1a;letter-spacing:-0.05px;-webkit-text-stroke:0.2px #1a1a1a">Content group</div>
<svg style="left:709px;top:454.2px" width="18.34" height="10.5" viewBox="-1 -1 17.96 10.28"><g fill="none" stroke="#88c990" stroke-width="1.45" stroke-linecap="butt"><path transform="translate(0.00,0)" d="M0.7 7.5 V2.3 Q0.7 0.7 2 0.7 Q3.3 0.7 3.3 2.3 V7.5 M0.7 4.0 H3.3"/><path transform="translate(5.10,0)" d="M0.7 0.7 V6.8 H2.2 Q3.4 6.8 3.4 5.2 Q3.4 3.7 2.2 3.7 H0.7 M0.7 0.7 H2.1 Q3.2 0.7 3.2 2.2 Q3.2 3.7 2.1 3.7"/><path transform="translate(10.20,0)" d="M3.6 1.6 Q3.3 0.7 2.2 0.7 Q0.7 0.7 0.7 3.75 Q0.7 6.8 2.2 6.8 Q3.3 6.8 3.6 5.9"/></g></svg>
<div class="t" style="left:738.20px;top:452.69px;font-size:11px;line-height:11px;color:#1a1a1a;letter-spacing:-0.05px;-webkit-text-stroke:0.2px #1a1a1a">Content ID</div>
<svg style="left:709px;top:476.2px" width="18.34" height="10.5" viewBox="-1 -1 17.96 10.28"><g fill="none" stroke="#88c990" stroke-width="1.45" stroke-linecap="butt"><path transform="translate(0.00,0)" d="M0.7 7.5 V2.3 Q0.7 0.7 2 0.7 Q3.3 0.7 3.3 2.3 V7.5 M0.7 4.0 H3.3"/><path transform="translate(5.10,0)" d="M0.7 0.7 V6.8 H2.2 Q3.4 6.8 3.4 5.2 Q3.4 3.7 2.2 3.7 H0.7 M0.7 0.7 H2.1 Q3.2 0.7 3.2 2.2 Q3.2 3.7 2.1 3.7"/><path transform="translate(10.20,0)" d="M3.6 1.6 Q3.3 0.7 2.2 0.7 Q0.7 0.7 0.7 3.75 Q0.7 6.8 2.2 6.8 Q3.3 6.8 3.6 5.9"/></g></svg>
<div class="t" style="left:738.20px;top:474.69px;font-size:11px;line-height:11px;color:#1a1a1a;letter-spacing:-0.05px;-webkit-text-stroke:0.2px #1a1a1a">Content type</div>
<svg style="left:709px;top:495px" width="16" height="16" viewBox="0 0 24 24"><path fill="#88c990" d="M12 2C6.48 2 2 6.48 2 12s4.48 10 10 10 10-4.48 10-10S17.52 2 12 2zm-1 17.93c-3.95-.49-7-3.85-7-7.93 0-.62.08-1.21.21-1.79L9 15v1c0 1.1.9 2 2 2v1.93zm6.9-2.54c-.26-.81-1-1.39-1.9-1.39h-1v-3c0-.55-.45-1-1-1H8v-2h2c.55 0 1-.45 1-1V7h2c1.1 0 2-.9 2-2v-.41c2.93 1.19 5 4.06 5 7.41 0 2.08-.8 3.97-2.1 5.39z"/></svg>
<div class="t" style="left:738.20px;top:496.69px;font-size:11px;line-height:11px;color:#1a1a1a;letter-spacing:-0.05px;-webkit-text-stroke:0.2px #1a1a1a">Country</div>
<svg style="left:709px;top:517px" width="16" height="16" viewBox="0 0 24 24"><path fill="#88c990" d="M12 2C6.48 2 2 6.48 2 12s4.48 10 10 10 10-4.48 10-10S17.52 2 12 2zm-1 17.93c-3.95-.49-7-3.85-7-7.93 0-.62.08-1.21.21-1.79L9 15v1c0 1.1.9 2 2 2v1.93zm6.9-2.54c-.26-.81-1-1.39-1.9-1.39h-1v-3c0-.55-.45-1-1-1H8v-2h2c.55 0 1-.45 1-1V7h2c1.1 0 2-.9 2-2v-.41c2.93 1.19 5 4.06 5 7.41 0 2.08-.8 3.97-2.1 5.39z"/></svg>
<div class="t" style="left:738.20px;top:518.69px;font-size:11px;line-height:11px;color:#1a1a1a;letter-spacing:-0.05px;-webkit-text-stroke:0.2px #1a1a1a">Country ID</div>
<svg style="left:708.8px;top:538.8px" width="16.3" height="16.3" viewBox="0 0 24 24"><path fill="#88c990" d="M17 12h-5v5h5v-5zM16 1v2H8V1H6v2H5c-1.11 0-1.99.9-1.99 2L3 19c0 1.1.89 2 2 2h14c1.1 0 2-.9 2-2V5c0-1.1-.9-2-2-2h-1V1h-2zm3 18H5V8h14v11z"/></svg>
<div class="t" style="left:738.20px;top:540.69px;font-size:11px;line-height:11px;color:#1a1a1a;letter-spacing:-0.05px;-webkit-text-stroke:0.2px #1a1a1a">Date</div>
<svg style="left:708.8px;top:560.8px" width="16.3" height="16.3" viewBox="0 0 24 24"><path fill="#88c990" d="M17 12h-5v5h5v-5zM16 1v2H8V1H6v2H5c-1.11 0-1.99.9-1.99 2L3 19c0 1.1.89 2 2 2h14c1.1 0 2-.9 2-2V5c0-1.1-.9-2-2-2h-1V1h-2zm3 18H5V8h14v11z"/></svg>
<div class="t" style="left:738.20px;top:562.69px;font-size:11px;line-height:11px;color:#1a1a1a;letter-spacing:-0.05px;-webkit-text-stroke:0.2px #1a1a1a">Day</div>
<svg style="left:708.8px;top:582.8px" width="16.3" height="16.3" viewBox="0 0 24 24"><path fill="#88c990" d="M17 12h-5v5h5v-5zM16 1v2H8V1H6v2H5c-1.11 0-1.99.9-1.99 2L3 19c0 1.1.89 2 2 2h14c1.1 0 2-.9 2-2V5c0-1.1-.9-2-2-2h-1V1h-2zm3 18H5V8h14v11z"/></svg>
<div class="t" style="left:738.20px;top:584.69px;font-size:11px;line-height:11px;color:#1a1a1a;letter-spacing:-0.05px;-webkit-text-stroke:0.2px #1a1a1a">Day of week</div>
<svg style="left:709px;top:608.2px" width="18.34" height="10.5" viewBox="-1 -1 17.96 10.28"><g fill="none" stroke="#88c990" stroke-width="1.45" stroke-linecap="butt"><path transform="translate(0.00,0)" d="M0.7 7.5 V2.3 Q0.7 0.7 2 0.7 Q3.3 0.7 3.3 2.3 V7.5 M0.7 4.0 H3.3"/><path transform="translate(5.10,0)" d="M0.7 0.7 V6.8 H2.2 Q3.4 6.8 3.4 5.2 Q3.4 3.7 2.2 3.7 H0.7 M0.7 0.7 H2.1 Q3.2 0.7 3.2 2.2 Q3.2 3.7 2.1 3.7"/><path transform="translate(10.20,0)" d="M3.6 1.6 Q3.3 0.7 2.2 0.7 Q0.7 0.7 0.7 3.75 Q0.7 6.8 2.2 6.8 Q3.3 6.8 3.6 5.9"/></g></svg>
<div class="t" style="left:738.20px;top:606.69px;font-size:11px;line-height:11px;color:#1a1a1a;letter-spacing:-0.05px;-webkit-text-stroke:0.2px #1a1a1a">Device</div>
<svg style="left:709px;top:630.2px" width="18.34" height="10.5" viewBox="-1 -1 17.96 10.28"><g fill="none" stroke="#88c990" stroke-width="1.45" stroke-linecap="butt"><path transform="translate(0.00,0)" d="M0.7 7.5 V2.3 Q0.7 0.7 2 0.7 Q3.3 0.7 3.3 2.3 V7.5 M0.7 4.0 H3.3"/><path transform="translate(5.10,0)" d="M0.7 0.7 V6.8 H2.2 Q3.4 6.8 3.4 5.2 Q3.4 3.7 2.2 3.7 H0.7 M0.7 0.7 H2.1 Q3.2 0.7 3.2 2.2 Q3.2 3.7 2.1 3.7"/><path transform="translate(10.20,0)" d="M3.6 1.6 Q3.3 0.7 2.2 0.7 Q0.7 0.7 0.7 3.75 Q0.7 6.8 2.2 6.8 Q3.3 6.8 3.6 5.9"/></g></svg>
<div class="t" style="left:738.20px;top:628.69px;font-size:11px;line-height:11px;color:#1a1a1a;letter-spacing:-0.05px;-webkit-text-stroke:0.2px #1a1a1a">Device brand</div>
<svg style="left:709px;top:652.2px" width="18.34" height="10.5" viewBox="-1 -1 17.96 10.28"><g fill="none" stroke="#88c990" stroke-width="1.45" stroke-linecap="butt"><path transform="translate(0.00,0)" d="M0.7 7.5 V2.3 Q0.7 0.7 2 0.7 Q3.3 0.7 3.3 2.3 V7.5 M0.7 4.0 H3.3"/><path transform="translate(5.10,0)" d="M0.7 0.7 V6.8 H2.2 Q3.4 6.8 3.4 5.2 Q3.4 3.7 2.2 3.7 H0.7 M0.7 0.7 H2.1 Q3.2 0.7 3.2 2.2 Q3.2 3.7 2.1 3.7"/><path transform="translate(10.20,0)" d="M3.6 1.6 Q3.3 0.7 2.2 0.7 Q0.7 0.7 0.7 3.75 Q0.7 6.8 2.2 6.8 Q3.3 6.8 3.6 5.9"/></g></svg>
<div class="t" style="left:738.20px;top:650.69px;font-size:11px;line-height:11px;color:#1a1a1a;letter-spacing:-0.05px;-webkit-text-stroke:0.2px #1a1a1a">Device category</div>
<svg style="left:709px;top:674.2px" width="18.34" height="10.5" viewBox="-1 -1 17.96 10.28"><g fill="none" stroke="#88c990" stroke-width="1.45" stroke-linecap="butt"><path transform="translate(0.00,0)" d="M0.7 7.5 V2.3 Q0.7 0.7 2 0.7 Q3.3 0.7 3.3 2.3 V7.5 M0.7 4.0 H3.3"/><path transform="translate(5.10,0)" d="M0.7 0.7 V6.8 H2.2 Q3.4 6.8 3.4 5.2 Q3.4 3.7 2.2 3.7 H0.7 M0.7 0.7 H2.1 Q3.2 0.7 3.2 2.2 Q3.2 3.7 2.1 3.7"/><path transform="translate(10.20,0)" d="M3.6 1.6 Q3.3 0.7 2.2 0.7 Q0.7 0.7 0.7 3.75 Q0.7 6.8 2.2 6.8 Q3.3 6.8 3.6 5.9"/></g></svg>
<div class="t" style="left:738.20px;top:672.69px;font-size:11px;line-height:11px;color:#1a1a1a;letter-spacing:-0.05px;-webkit-text-stroke:0.2px #1a1a1a">Device model</div>
<svg style="left:709px;top:696.2px" width="18.34" height="10.5" viewBox="-1 -1 17.96 10.28"><g fill="none" stroke="#88c990" stroke-width="1.45" stroke-linecap="butt"><path transform="translate(0.00,0)" d="M0.7 7.5 V2.3 Q0.7 0.7 2 0.7 Q3.3 0.7 3.3 2.3 V7.5 M0.7 4.0 H3.3"/><path transform="translate(5.10,0)" d="M0.7 0.7 V6.8 H2.2 Q3.4 6.8 3.4 5.2 Q3.4 3.7 2.2 3.7 H0.7 M0.7 0.7 H2.1 Q3.2 0.7 3.2 2.2 Q3.2 3.7 2.1 3.7"/><path transform="translate(10.20,0)" d="M3.6 1.6 Q3.3 0.7 2.2 0.7 Q0.7 0.7 0.7 3.75 Q0.7 6.8 2.2 6.8 Q3.3 6.8 3.6 5.9"/></g></svg>
<div class="t" style="left:738.20px;top:694.69px;font-size:11px;line-height:11px;color:#1a1a1a;letter-spacing:-0.05px;-webkit-text-stroke:0.2px #1a1a1a">Device OS</div>

<div class="box" style="left:403px;top:53px;width:92px;height:81px;border:1px solid #dadce0;border-radius:4px;background:#fff"></div>
<div class="t" style="left:412.50px;top:60.85px;font-size:14px;line-height:14px;color:#333;letter-spacing:0.3px">1 condition</div>
<svg style="left:403px;top:53px" width="92" height="81" viewBox="403 53 92 81">
  <defs><pattern id="hatch" width="4.2" height="4.2" patternUnits="userSpaceOnUse" patternTransform="rotate(45)"><rect width="4.2" height="4.2" fill="#d2e3fc"/><line x1="0.6" y1="0" x2="0.6" y2="4.2" stroke="#a9c6f6" stroke-width="1"/></pattern></defs>
  <circle cx="437.3" cy="92.7" r="15.2" fill="url(#hatch)" stroke="#8fb5f2" stroke-width="1"/>
  <circle cx="460.6" cy="92.7" r="15.2" fill="url(#hatch)" stroke="#8fb5f2" stroke-width="1"/>
  <circle cx="437.3" cy="92.7" r="15.2" fill="none" stroke="#8fb5f2" stroke-width="1"/>
</svg>
<svg style="left:439.7px;top:109.7px" width="18.7" height="18.7" viewBox="0 0 24 24"><path fill="#333" d="M3 17.25V21h3.75L17.81 9.94l-3.75-3.75L3 17.25zM20.71 7.04c.39-.39.39-1.02 0-1.410l-2.34-2.34c-.39-.39-1.02-.39-1.41 0l-1.83 1.83 3.75 3.75 1.83-1.83z"/></svg>
<div class="box" style="left:899px;top:53px;width:89px;height:113px;border:1px solid #dadce0;border-radius:4px;background:#fff"></div>
<div class="t" style="left:900px;top:72.95px;width:88px;text-align:center;font-size:14px;line-height:18px;color:#3c4043;white-space:normal">Join<br><span style="position:static;letter-spacing:0.6px">another</span><br>table</div>

<div class="box" style="left:937px;top:43px;width:286px;height:651px;background:#fff;border-left:1px solid #d6d6d6"></div>
<div class="t" style="left:946.50px;top:48.11px;font-size:10.5px;line-height:10.5px;color:#888;font-weight:bold;letter-spacing:-0.1px">Data source name</div>
<div class="t" style="left:950.60px;top:71.09px;font-size:13px;line-height:13px;color:#333;letter-spacing:-0.15px">GA4 new vs. returning</div>
<div class="box" style="left:948px;top:91px;width:275px;height:1px;background:#dcdcdc"></div>
<div class="t" style="left:946.50px;top:108.31px;font-size:10.5px;line-height:10.5px;color:#999;font-weight:bold;letter-spacing:-0.1px">Included dimensions and metrics</div>
<svg style="left:1114px;top:106px" width="16" height="16" viewBox="0 0 24 24"><path fill="#999" d="M11 18h2v-2h-2v2zm1-16C6.48 2 2 6.48 2 12s4.48 10 10 10 10-4.48 10-10S17.52 2 12 2zm0 18c-4.41 0-8-3.59-8-8s3.59-8 8-8 8 3.59 8 8-3.59 8-8 8zm0-14c-2.21 0-4 1.79-4 4h2c0-1.1.9-2 2-2s2 .9 2 2c0 2-3 1.75-3 5h2c0-2.25 3-2.5 3-5 0-2.21-1.79-4-4-4z"/></svg>
<div class="box" style="left:946px;top:129.3px;width:277px;height:21.3px;background:#c8e6c9;border-radius:2px 0 0 2px"></div><svg style="left:950px;top:136.1px" width="18.34" height="10.5" viewBox="-1 -1 17.96 10.28"><g fill="none" stroke="#333" stroke-width="1.3" stroke-linecap="butt"><path transform="translate(0.00,0)" d="M0.7 7.5 V2.3 Q0.7 0.7 2 0.7 Q3.3 0.7 3.3 2.3 V7.5 M0.7 4.0 H3.3"/><path transform="translate(5.10,0)" d="M0.7 0.7 V6.8 H2.2 Q3.4 6.8 3.4 5.2 Q3.4 3.7 2.2 3.7 H0.7 M0.7 0.7 H2.1 Q3.2 0.7 3.2 2.2 Q3.2 3.7 2.1 3.7"/><path transform="translate(10.20,0)" d="M3.6 1.6 Q3.3 0.7 2.2 0.7 Q0.7 0.7 0.7 3.75 Q0.7 6.8 2.2 6.8 Q3.3 6.8 3.6 5.9"/></g></svg><div class="t" style="left:978.30px;top:134.49px;font-size:11px;line-height:11px;color:#212121;letter-spacing:-0.2px">User type <i style="color:#666">(Table 1)</i></div><div class="box" style="left:946px;top:157.3px;width:277px;height:21.3px;background:#c8e6c9;border-radius:2px 0 0 2px"></div><svg style="left:950px;top:164.1px" width="18.34" height="10.5" viewBox="-1 -1 17.96 10.28"><g fill="none" stroke="#333" stroke-width="1.3" stroke-linecap="butt"><path transform="translate(0.00,0)" d="M0.7 7.5 V2.3 Q0.7 0.7 2 0.7 Q3.3 0.7 3.3 2.3 V7.5 M0.7 4.0 H3.3"/><path transform="translate(5.10,0)" d="M0.7 0.7 V6.8 H2.2 Q3.4 6.8 3.4 5.2 Q3.4 3.7 2.2 3.7 H0.7 M0.7 0.7 H2.1 Q3.2 0.7 3.2 2.2 Q3.2 3.7 2.1 3.7"/><path transform="translate(10.20,0)" d="M3.6 1.6 Q3.3 0.7 2.2 0.7 Q0.7 0.7 0.7 3.75 Q0.7 6.8 2.2 6.8 Q3.3 6.8 3.6 5.9"/></g></svg><div class="t" style="left:978.30px;top:162.49px;font-size:11px;line-height:11px;color:#212121;letter-spacing:-0.2px">User type <i style="color:#666">(Table 2)</i></div><div class="box" style="left:946px;top:185.3px;width:277px;height:21.3px;background:#c8e6c9;border-radius:2px 0 0 2px"></div><svg style="left:950px;top:192.1px" width="18.34" height="10.5" viewBox="-1 -1 17.96 10.28"><g fill="none" stroke="#333" stroke-width="1.3" stroke-linecap="butt"><path transform="translate(0.00,0)" d="M0.2 0.9 H1.9 V7.5"/><path transform="translate(5.10,0)" d="M0.5 1.6 Q0.8 0.7 2 0.7 Q3.3 0.7 3.3 2.1 Q3.3 3.4 1.8 4.6 L0.7 5.6 V6.8 H3.6"/><path transform="translate(10.20,0)" d="M0.4 0.7 H2.1 Q3.3 0.7 3.3 2.1 Q3.3 3.6 1.7 3.6 Q3.4 3.6 3.4 5.2 Q3.4 6.8 2 6.8 H0.4"/></g></svg><div class="t" style="left:978.30px;top:190.49px;font-size:11px;line-height:11px;color:#212121;letter-spacing:-0.2px">New users</div><div class="box" style="left:946px;top:213.3px;width:277px;height:21.3px;background:#c8e6c9;border-radius:2px 0 0 2px"></div><svg style="left:950px;top:220.1px" width="18.34" height="10.5" viewBox="-1 -1 17.96 10.28"><g fill="none" stroke="#333" stroke-width="1.3" stroke-linecap="butt"><path transform="translate(0.00,0)" d="M0.2 0.9 H1.9 V7.5"/><path transform="translate(5.10,0)" d="M0.5 1.6 Q0.8 0.7 2 0.7 Q3.3 0.7 3.3 2.1 Q3.3 3.4 1.8 4.6 L0.7 5.6 V6.8 H3.6"/><path transform="translate(10.20,0)" d="M0.4 0.7 H2.1 Q3.3 0.7 3.3 2.1 Q3.3 3.6 1.7 3.6 Q3.4 3.6 3.4 5.2 Q3.4 6.8 2 6.8 H0.4"/></g></svg><div class="t" style="left:978.30px;top:218.49px;font-size:11px;line-height:11px;color:#212121;letter-spacing:-0.2px">Returning users</div>
<div class="box" style="left:298px;top:279px;width:400px;height:404px;background:#fff;border-radius:0 0 4px 4px;box-shadow:0 5px 14px rgba(0,0,0,.36),0 0 4px rgba(0,0,0,.14)"></div>
<div class="box" style="left:298px;top:279px;width:400px;height:28px;background:#90caf9"></div>
<svg style="left:303px;top:285.9px" width="18.57" height="10.5" viewBox="-1 -1 17.93 10.14"><g fill="none" stroke="#222" stroke-width="1.3" stroke-linecap="butt"><path transform="translate(0.00,0)" d="M0.4 7.5 L2.1 0.4 L3.7 7.5 M1.1 5 H3"/><path transform="translate(5.10,0)" d="M0.7 0 V5.3 Q0.7 6.8 2 6.8 Q3.3 6.8 3.3 5.3 V0"/><path transform="translate(10.20,0)" d="M0 0.7 H4 M2 0.7 V7.5"/></g></svg>
<div class="t" style="left:326.30px;top:285.99px;font-size:13px;line-height:13px;color:#212121;letter-spacing:-0.15px">Returning users</div>
<div class="t" style="left:316.60px;top:317.06px;font-size:9.5px;line-height:9.5px;color:#aaa">Name</div>
<div class="t" style="left:318.80px;top:336.19px;font-size:13px;line-height:13px;color:#333;letter-spacing:-0.15px">Returning users</div>
<div class="box" style="left:408px;top:335px;width:1px;height:15px;background:#111"></div>
<div class="box" style="left:316px;top:355px;width:364px;height:2px;background:#9e9e9e"></div>
<div class="t" style="left:314.20px;top:378.06px;font-size:9.5px;line-height:9.5px;color:#888">Formula</div>
<div class="box" style="left:314px;top:398px;width:368px;height:131px;border:1px solid #d0d0d0;background:#fff"></div>
<div class="box" style="left:315px;top:399px;width:45px;height:129px;background:#f7f7f7;border-right:1px solid #dcdcdc"></div>
<div class="t" style="left:350.50px;top:409.69px;font-size:11px;line-height:11px;color:#999">1</div>
<div class="box" style="left:365px;top:399.3px;width:89px;height:20.5px;background:#bbdefb;border-radius:2px"></div>
<svg style="left:368.7px;top:405.4px" width="19.14" height="10.5" viewBox="-1 -1 17.87 9.80"><g fill="none" stroke="#333" stroke-width="1.3" stroke-linecap="butt"><path transform="translate(0.00,0)" d="M0.4 7.5 L2.1 0.4 L3.7 7.5 M1.1 5 H3"/><path transform="translate(5.10,0)" d="M0.7 0 V5.3 Q0.7 6.8 2 6.8 Q3.3 6.8 3.3 5.3 V0"/><path transform="translate(10.20,0)" d="M0 0.7 H4 M2 0.7 V7.5"/></g></svg>
<div class="t" style="left:389.30px;top:402.57px;font-size:12.2px;line-height:12.2px;color:#222;letter-spacing:-0.1px">Total users</div>
<div class="box" style="left:455.2px;top:410px;width:5.3px;height:2px;background:#444"></div>
<div class="box" style="left:461.3px;top:399.3px;width:86.5px;height:20.5px;background:#bbdefb;border-radius:2px"></div>
<svg style="left:465px;top:405.4px" width="19.14" height="10.5" viewBox="-1 -1 17.87 9.80"><g fill="none" stroke="#333" stroke-width="1.3" stroke-linecap="butt"><path transform="translate(0.00,0)" d="M0.4 7.5 L2.1 0.4 L3.7 7.5 M1.1 5 H3"/><path transform="translate(5.10,0)" d="M0.7 0 V5.3 Q0.7 6.8 2 6.8 Q3.3 6.8 3.3 5.3 V0"/><path transform="translate(10.20,0)" d="M0 0.7 H4 M2 0.7 V7.5"/></g></svg>
<div class="t" style="left:485.80px;top:402.74px;font-size:12px;line-height:12px;color:#222;letter-spacing:-0.1px">New users</div>
<div class="t" style="left:314.00px;top:572.29px;font-size:9.7px;line-height:9.7px;color:#777">Aggregation</div>
<div class="box" style="left:313.8px;top:590.3px;width:19.4px;height:19.4px;border:2px solid #9e9e9e;border-radius:50%"></div>
<div class="box" style="left:318.8px;top:595.3px;width:9.4px;height:9.4px;border-radius:50%;background:#5e97f6"></div>
<div class="t" style="left:344.20px;top:595.16px;font-size:12.8px;line-height:12.8px;color:#aaa;letter-spacing:-0.1px">Auto</div>
<div class="box" style="left:594.3px;top:631.1px;width:87.4px;height:36px;background:#e3e3e3;border-radius:3px"></div>
<div class="t" style="left:617.40px;top:642.15px;font-size:14px;line-height:14px;color:#8c8c8c;letter-spacing:-0.55px">APPLY</div>
</div></body></html>
